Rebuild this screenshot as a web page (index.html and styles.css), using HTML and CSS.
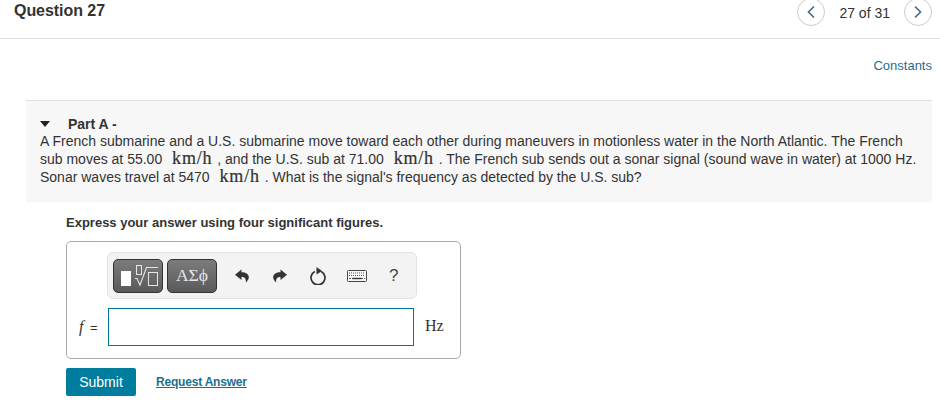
FILE: index.html
```html
<!DOCTYPE html>
<html lang="en">
<head>
    <meta charset="UTF-8">
    <meta name="viewport" content="width=device-width, initial-scale=1.0">
    <title>Question 27</title>
    <link rel="stylesheet" href="styles.css">
</head>
<body>
    <header class="top-bar">
        <h1>Question 27</h1>
        <nav class="pager">
            <a class="pager-btn" href="#">
                <svg width="10" height="14" viewBox="0 0 10 14"><path d="M8 1.5 2.5 7 8 12.5" fill="none" stroke="#4d6d80" stroke-width="1.7"/></svg>
            </a>
            <span class="pager-text">27 of 31</span>
            <a class="pager-btn" href="#">
                <svg width="10" height="14" viewBox="0 0 10 14"><path d="M2 1.5 7.5 7 2 12.5" fill="none" stroke="#4d6d80" stroke-width="1.7"/></svg>
            </a>
        </nav>
    </header>

    <div class="constants"><a href="#">Constants</a></div>

    <section class="part">
        <div class="part-title"><span class="caret"></span><strong>Part A -</strong></div>
        <p>A French submarine and a U.S. submarine move toward each other during maneuvers in motionless water in the North Atlantic. The French sub moves at 55.00 <span class="math">km/h</span> , and the U.S. sub at 71.00 <span class="math">km/h</span> . The French sub sends out a sonar signal (sound wave in water) at 1000 Hz. Sonar waves travel at 5470 <span class="math">km/h</span> . What is the signal's frequency as detected by the U.S. sub?</p>
    </section>

    <main class="answer">
        <p class="instruction">Express your answer using four significant figures.</p>
        <div class="answer-box">
            <div class="toolbar">
                <button class="tool-btn" type="button">
                    <svg width="40" height="28" viewBox="0 0 40 28">
                        <rect x="3" y="9" width="10" height="15" fill="#fff"/>
                        <rect x="18.5" y="3.5" width="5" height="9" fill="none" stroke="#e6e6e6"/>
                        <path d="M17 16.5h2l3 6.5 6.5-17.5H40" fill="none" stroke="#e6e6e6" stroke-width="1.1"/>
                        <rect x="30.5" y="10.5" width="9" height="13" fill="none" stroke="#e6e6e6"/>
                    </svg>
                </button>
                <button class="tool-btn greek" type="button">ΑΣϕ</button>
                <div class="tool-icons">
                    <svg class="tool-icon undo" width="14" height="14" viewBox="0 0 14 14"><path d="M6.5.5 0 5.8l6.5 5.2V8c3 0 4.6 1.2 4.4 5.5C13 11.500 14 9.800 13.800 7.800 13.500 5 11 3.300 6.500 3.200z" fill="#333"/></svg>
                    <svg class="tool-icon redo" width="14" height="14" viewBox="0 0 14 14"><path d="M7.500.5 14 5.800 7.500 11V8c-3 0-4.600 1.200-4.400 5.500C1 11.500 0 9.800.2 7.800.5 5 3 3.300 7.500 3.200z" fill="#333"/></svg>
                    <svg class="tool-icon reload" width="18" height="18" viewBox="0 0 18 18"><path d="M5.800 4.500a7 7 0 1 0 6.400 0" fill="none" stroke="#333" stroke-width="1.700"/><path d="M7.500 0 13 4 7.500 7.500z" fill="#333"/></svg>
                    <svg class="tool-icon keys" width="20" height="12" viewBox="0 0 20 12"><rect x=".5" y=".5" width="19" height="11" rx="1" fill="#f8f8f8" stroke="#444"/><path d="M2 3h16M2 5.500h16" stroke="#555" stroke-dasharray="1 1"/><path d="M2 8.500h16" stroke="#555" stroke-dasharray="2 1"/><path d="M5.500 8.500h9" stroke="#333" stroke-width="1.400"/></svg>
                    <span class="help">?</span>
                </div>
            </div>
            <div class="input-row">
                <label for="answer-input"><i>f</i> =</label>
                <input id="answer-input" type="text">
                <span class="unit">Hz</span>
            </div>
        </div>
        <div class="actions">
            <button class="submit" type="button">Submit</button>
            <a class="request" href="#">Request Answer</a>
        </div>
    </main>
</body>
</html>
```

FILE: styles.css
```css
* {
    box-sizing: border-box;
}
body {
    margin: 0;
    font-family: "Liberation Sans", Arial, sans-serif;
    font-size: 14px;
    color: #333;
    background: #fff;
    overflow: hidden;
}
a {
    color: #1c6f8f;
    text-decoration: none;
}
.top-bar {
    height: 39px;
    display: flex;
    justify-content: space-between;
    align-items: flex-start;
    padding: 0 8px 0 14px;
    border-bottom: 1px solid #e0e0e0;
}
.top-bar h1 {
    margin: 2px 0 0;
    font-size: 16px;
    line-height: 18px;
    font-weight: bold;
    letter-spacing: -.05px;
    color: #333;
}
.pager {
    display: flex;
    align-items: center;
    margin-top: -4px;
}
.pager-btn {
    width: 28px;
    height: 28px;
    border: 1px solid #ccc;
    border-radius: 50%;
    display: flex;
    align-items: center;
    justify-content: center;
}
.pager-text {
    margin: 3px 14px 0;
    line-height: 28px;
}
.constants {
    padding: 19px 8px 0 0;
    text-align: right;
    font-size: 13px;
    line-height: 16px;
    height: 61px;
}
.part {
    margin: 0 8px 0 26px;
    height: 102px;
    padding: 15px 14px 0 14px;
    background: #f7f7f7;
    border-top: 1px solid #e0e0e0;
    line-height: 18px;
}
.part p {
    margin: 0;
}
.part-title {
    display: flex;
    align-items: center;
    height: 16px;
}
.caret {
    width: 0;
    height: 0;
    margin-right: 18px;
    border-left: 5px solid transparent;
    border-right: 5px solid transparent;
    border-top: 6px solid #222;
}
.math {
    display: inline-block;
    font-family: "Liberation Serif", serif;
    font-size: 18px;
    line-height: 16px;
    letter-spacing: .8px;
    margin: 0 1px 0 6px;
    -webkit-text-stroke: .2px #333;
}
.answer {
    padding: 13px 0 0 66px;
}
.instruction {
    margin: 0 0 10px;
    font-size: 13px;
    font-weight: bold;
    line-height: 16px;
}
.answer-box {
    width: 395px;
    height: 118px;
    padding: 10px 0 0 40px;
    border: 1px solid #aaa;
    border-radius: 5px;
}
.toolbar {
    width: 310px;
    height: 47px;
    display: flex;
    align-items: center;
    padding-left: 5px;
    gap: 4px;
    background: #f3f3f3;
    border: 1px solid #e2e2e2;
    border-radius: 6px;
}
.tool-btn {
    width: 50px;
    height: 34px;
    padding: 0;
    display: flex;
    align-items: center;
    justify-content: center;
    background: linear-gradient(#7c7c7c, #5a5a5a);
    border: 1px solid #333;
    border-radius: 5px;
}
.greek {
    color: #e6e6e6;
    font-family: "Liberation Serif", serif;
    font-size: 17.5px;
}
.tool-icons {
    flex: 1;
    display: flex;
    align-items: center;
    padding-left: 14px;
}
.undo {
    margin-right: 24px;
}
.redo {
    margin-right: 22px;
}
.reload {
    margin-right: 20px;
}
.keys {
    margin-right: 22px;
}
.help {
    font-size: 17px;
    color: #444;
}
.input-row {
    display: flex;
    align-items: center;
    margin-top: 9px;
}
.input-row label {
    width: 29px;
    margin-left: -28px;
    flex: none;
    font-size: 13px;
}
.input-row label i {
    margin-right: 3px;
    font-family: "Liberation Serif", serif;
    font-size: 16px;
}
.input-row input {
    width: 306px;
    height: 38px;
    border: 1px solid #00759a;
    background: #fff;
    outline: none;
}
.unit {
    margin: 0 0 2px 11px;
    font-family: "Liberation Serif", serif;
    font-size: 16px;
}
.actions {
    display: flex;
    align-items: center;
    margin-top: 9px;
}
.submit {
    width: 70px;
    height: 28px;
    padding: 0;
    color: #fff;
    background: #007c9e;
    border: none;
    border-radius: 2px;
    font-family: "Liberation Sans", sans-serif;
    font-size: 14px;
}
.request {
    margin-left: 20px;
    font-weight: bold;
    font-size: 12px;
    letter-spacing: -.2px;
    text-decoration: underline;
}
```
